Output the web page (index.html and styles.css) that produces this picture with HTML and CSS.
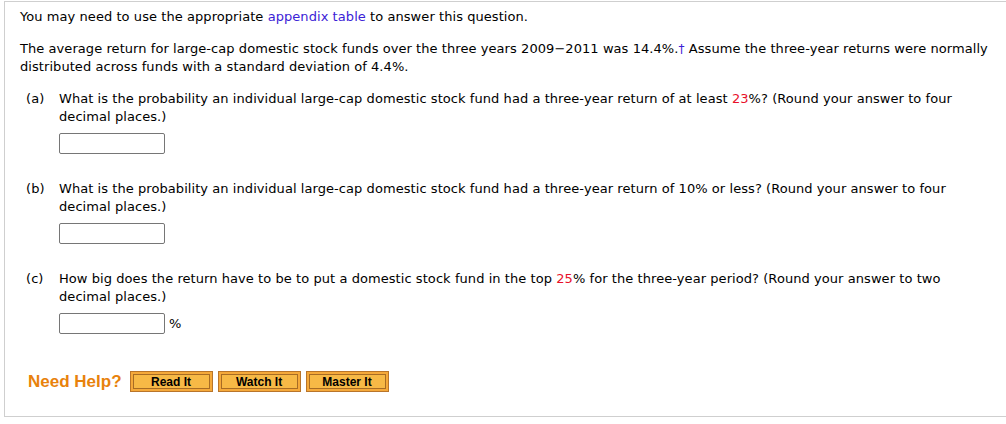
FILE: index.html
```html
<!DOCTYPE html>
<html>
<head>
<meta charset="utf-8">
<link rel="stylesheet" href="styles.css">
</head>
<body>
<div class="box">
  <p class="intro">You may need to use the appropriate <a class="link" href="#">appendix table</a> to answer this question.</p>
  <p class="stem">The average return for large-cap domestic stock funds over the three years 2009&minus;2011 was 14.4%.<span class="dagger">&dagger;</span> Assume the three-year returns were normally distributed across funds with a standard deviation of 4.4%.</p>

  <div class="part">
    <div class="label">(a)</div>
    <div class="body">
      <p class="q">What is the probability an individual large-cap domestic stock fund had a three-year return of at least <span class="red">23</span>%? (Round your answer to four decimal places.)</p>
      <div class="answer"><input class="field" type="text"></div>
    </div>
  </div>

  <div class="part">
    <div class="label">(b)</div>
    <div class="body">
      <p class="q">What is the probability an individual large-cap domestic stock fund had a three-year return of 10% or less? (Round your answer to four decimal places.)</p>
      <div class="answer"><input class="field" type="text"></div>
    </div>
  </div>

  <div class="part">
    <div class="label">(c)</div>
    <div class="body">
      <p class="q">How big does the return have to be to put a domestic stock fund in the top <span class="red">25</span>% for the three-year period? (Round your answer to two decimal places.)</p>
      <div class="answer"><input class="field" type="text"><span class="unit">%</span></div>
    </div>
  </div>

  <div class="help">
    <span class="help-title">Need Help?</span>
    <button class="btn">Read It</button>
    <button class="btn">Watch It</button>
    <button class="btn">Master It</button>
  </div>
</div>
</body>
</html>
```
FILE: styles.css
```css
html, body {
  margin: 0;
  padding: 0;
  background: #fff;
}
body {
  font-family: "DejaVu Sans", Verdana, sans-serif;
  font-size: 13px;
  line-height: 18px;
  letter-spacing: 0.065px;
  color: #000;
}
.box {
  margin: 1px 0 0 4px;
  border: 1px solid #cfcfcf;
  border-right: none;
  padding: 6px 0 0 15px;
  height: 416px;
  box-sizing: border-box;
}
p { margin: 0; }
.intro { margin-bottom: 14px; }
.link { color: #3b22d6; text-decoration: none; }
.dagger { color: #3b22d6; font-size: 12px; }
.stem { margin-bottom: 14px; padding-right: 10px; }
.red { color: #e8102a; }
.part {
  display: flex;
  margin-left: 6px;
  margin-bottom: 26px;
}
.label { width: 33px; flex: none; }
.body { flex: 1; padding-right: 40px; }
.answer {
  margin-top: 7px;
  display: flex;
  align-items: center;
}
.field {
  width: 106px;
  height: 21px;
  box-sizing: border-box;
  border: 1px solid #767676;
  border-radius: 2px;
  margin: 0;
  padding: 0;
}
.unit { margin-left: 4px; margin-top: 1px; }
.help {
  display: flex;
  align-items: center;
  margin-left: 8px;
  margin-top: 37px;
}
.help-title {
  font-family: "Liberation Sans", Arial, sans-serif;
  font-weight: bold;
  font-size: 17px;
  letter-spacing: 0;
  color: #e8820c;
  margin-right: 8px;
}
.btn {
  font-family: "Liberation Sans", Arial, sans-serif;
  font-weight: bold;
  font-size: 12px;
  letter-spacing: 0;
  color: #000;
  width: 83px;
  height: 21px;
  margin: 0 5px 0 0;
  padding: 0;
  background: #f7b946;
  border: 1px solid #b9752a;
  box-shadow: inset 0 0 0 2px #f5a93a, inset 0 0 0 3px #a86c24;
  cursor: pointer;
}
```
